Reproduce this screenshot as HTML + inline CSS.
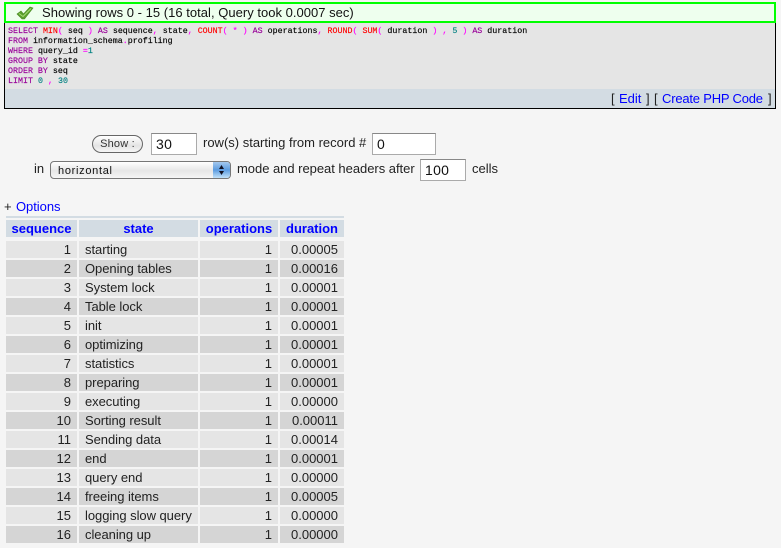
<!DOCTYPE html>
<html>
<head>
<meta charset="utf-8">
<style>
html,body{margin:0;padding:0}
body{width:781px;height:548px;background:#f5f5f5;position:relative;overflow:hidden;font-family:"Liberation Sans",sans-serif;font-size:13px;color:#222}
.a{position:absolute;white-space:nowrap}
a{color:#0000ff;text-decoration:none}
#ok{left:4px;top:2px;width:768px;height:17px;border:2px solid #00ff00;background:#eeffee}
#box{left:4px;top:23px;width:770px;height:85px;border:1px solid #000;border-top:0;background:#e5e5e5}
#foot{left:0;bottom:0;width:770px;height:19px;background:#d3dce3}
#sql{left:8px;top:27px;font:8.32px/10px "Liberation Mono",monospace;color:#000;white-space:pre;-webkit-text-stroke:.15px}
.k{color:#990099}.f{color:#ff0000}.p{color:#ff00ff}.n{color:#008080}
.in{background:#fff;border:1px solid #aaa;border-top-color:#888;height:22px;box-sizing:border-box;font-size:14px;line-height:21px;padding-left:4px;color:#111;letter-spacing:.3px}
#btn{left:92px;top:135px;width:51px;height:18px;box-sizing:border-box;border:1px solid #666;border-radius:9px;background:linear-gradient(#fff,#e4e4e4 60%,#f6f6f6);font-size:11px;line-height:17px;text-align:center;color:#333;letter-spacing:.2px}
#sel{left:50px;top:161px;width:181px;height:18px;box-sizing:border-box;border:1px solid #777;border-radius:4px;background:linear-gradient(#fff,#e6e6e6 55%,#f6f6f6);font-size:11px;line-height:18px;padding-left:7px;color:#111;letter-spacing:.7px;overflow:hidden}
#arr{position:absolute;right:0;top:0;width:17px;height:16px;background:linear-gradient(#a4c8ee,#5c9ce0 50%,#c2e2fa)}
.top{position:absolute;left:6px;top:216px;width:338px;height:2px;background:#d3dce3}
.c{position:absolute;height:17px;line-height:17px;box-sizing:border-box;padding:0 6px;color:#222;white-space:nowrap}
.h{font-weight:bold;text-align:center;background:#d3dce3;color:#0000ff;padding:0}
.o{background:#e5e5e5}.e{background:#d5d5d5}.c1{left:6px;width:71px;text-align:right}.c2{left:79px;width:119px;letter-spacing:-.05px}.c3{left:200px;width:78px;text-align:right}.c4{left:280px;width:64px;text-align:right}
</style>
</head>
<body>
<div class="a" id="ok"></div>
<svg class="a" style="left:16px;top:6px" width="18" height="14" viewBox="0 0 18 14"><path d="M1 8 L5 5 L7.5 8 L14 1 L17 2 L8.5 13 L6 13 Z" fill="#5aa02c" stroke="#4a8a24" stroke-width=".6"/><path d="M3 7.5 L7 10.5 L15 2.5" fill="none" stroke="#a8dc78" stroke-width="1"/></svg>
<div class="a" style="left:42px;top:5px;font-size:13px;line-height:16px;color:#111;letter-spacing:.02px">Showing rows 0 - 15 (16 total, Query took 0.0007 sec)</div>
<div class="a" id="box"><div class="a" id="foot"></div></div>
<div class="a" id="sql"><span class="k">SELECT</span> <span class="f">MIN</span><span class="p">(</span> seq <span class="p">)</span> <span class="k">AS</span> sequence<span class="p">,</span> state<span class="p">,</span> <span class="f">COUNT</span><span class="p">(</span> <span class="p">*</span> <span class="p">)</span> <span class="k">AS</span> operations<span class="p">,</span> <span class="f">ROUND</span><span class="p">(</span> <span class="f">SUM</span><span class="p">(</span> duration <span class="p">)</span> <span class="p">,</span> <span class="n">5</span> <span class="p">)</span> <span class="k">AS</span> duration
<span class="k">FROM</span> information_schema<span class="p">.</span>profiling
<span class="k">WHERE</span> query_id <span class="p">=</span><span class="n">1</span>
<span class="k">GROUP BY</span> state
<span class="k">ORDER BY</span> seq
<span class="k">LIMIT</span> <span class="n">0</span> <span class="p">,</span> <span class="n">30</span></div>
<div class="a" style="left:611px;top:91px;line-height:16px">[</div>
<div class="a" style="left:619px;top:91px;line-height:16px"><a>Edit</a></div>
<div class="a" style="left:646px;top:91px;line-height:16px">]</div>
<div class="a" style="left:654px;top:91px;line-height:16px">[</div>
<div class="a" style="left:662px;top:91px;line-height:16px;letter-spacing:-.2px"><a>Create PHP Code</a></div>
<div class="a" style="left:768px;top:91px;line-height:16px">]</div>

<div class="a" id="btn">Show :</div>
<div class="a in" style="left:151px;top:133px;width:46px">30</div>
<div class="a" style="left:203px;top:135px;line-height:16px">row(s) starting from record #</div>
<div class="a in" style="left:372px;top:133px;width:64px">0</div>
<div class="a" style="left:34px;top:161px;line-height:16px">in</div>
<div class="a" id="sel">horizontal<div id="arr"><svg width="17" height="16" style="display:block"><path d="M8.5 3 L11 7 H6 Z M8.5 13 L11 9 H6 Z" fill="#112"/></svg></div></div>
<div class="a" style="left:237px;top:161px;line-height:16px;letter-spacing:-.03px">mode and repeat headers after</div>
<div class="a in" style="left:420px;top:159px;width:46px">100</div>
<div class="a" style="left:472px;top:161px;line-height:16px">cells</div>
<div class="a" style="left:4px;top:199px;line-height:16px">+</div>
<div class="a" style="left:16px;top:199px;line-height:16px;letter-spacing:-.05px"><a>Options</a></div>

<div class="top"></div>
<div class="c h" style="left:6px;top:220px;width:71px">sequence</div>
<div class="c h" style="left:79px;top:220px;width:119px">state</div>
<div class="c h" style="left:200px;top:220px;width:78px">operations</div>
<div class="c h" style="left:280px;top:220px;width:64px">duration</div>
<div class="c o c1" style="top:241px">1</div><div class="c o c2" style="top:241px">starting</div><div class="c o c3" style="top:241px">1</div><div class="c o c4" style="top:241px">0.00005</div>
<div class="c e c1" style="top:260px">2</div><div class="c e c2" style="top:260px">Opening tables</div><div class="c e c3" style="top:260px">1</div><div class="c e c4" style="top:260px">0.00016</div>
<div class="c o c1" style="top:279px">3</div><div class="c o c2" style="top:279px">System lock</div><div class="c o c3" style="top:279px">1</div><div class="c o c4" style="top:279px">0.00001</div>
<div class="c e c1" style="top:298px">4</div><div class="c e c2" style="top:298px">Table lock</div><div class="c e c3" style="top:298px">1</div><div class="c e c4" style="top:298px">0.00001</div>
<div class="c o c1" style="top:317px">5</div><div class="c o c2" style="top:317px">init</div><div class="c o c3" style="top:317px">1</div><div class="c o c4" style="top:317px">0.00001</div>
<div class="c e c1" style="top:336px">6</div><div class="c e c2" style="top:336px">optimizing</div><div class="c e c3" style="top:336px">1</div><div class="c e c4" style="top:336px">0.00001</div>
<div class="c o c1" style="top:355px">7</div><div class="c o c2" style="top:355px">statistics</div><div class="c o c3" style="top:355px">1</div><div class="c o c4" style="top:355px">0.00001</div>
<div class="c e c1" style="top:374px">8</div><div class="c e c2" style="top:374px">preparing</div><div class="c e c3" style="top:374px">1</div><div class="c e c4" style="top:374px">0.00001</div>
<div class="c o c1" style="top:393px">9</div><div class="c o c2" style="top:393px">executing</div><div class="c o c3" style="top:393px">1</div><div class="c o c4" style="top:393px">0.00000</div>
<div class="c e c1" style="top:412px">10</div><div class="c e c2" style="top:412px">Sorting result</div><div class="c e c3" style="top:412px">1</div><div class="c e c4" style="top:412px">0.00011</div>
<div class="c o c1" style="top:431px">11</div><div class="c o c2" style="top:431px">Sending data</div><div class="c o c3" style="top:431px">1</div><div class="c o c4" style="top:431px">0.00014</div>
<div class="c e c1" style="top:450px">12</div><div class="c e c2" style="top:450px">end</div><div class="c e c3" style="top:450px">1</div><div class="c e c4" style="top:450px">0.00001</div>
<div class="c o c1" style="top:469px">13</div><div class="c o c2" style="top:469px">query end</div><div class="c o c3" style="top:469px">1</div><div class="c o c4" style="top:469px">0.00000</div>
<div class="c e c1" style="top:488px">14</div><div class="c e c2" style="top:488px">freeing items</div><div class="c e c3" style="top:488px">1</div><div class="c e c4" style="top:488px">0.00005</div>
<div class="c o c1" style="top:507px">15</div><div class="c o c2" style="top:507px">logging slow query</div><div class="c o c3" style="top:507px">1</div><div class="c o c4" style="top:507px">0.00000</div>
<div class="c e c1" style="top:526px">16</div><div class="c e c2" style="top:526px">cleaning up</div><div class="c e c3" style="top:526px">1</div><div class="c e c4" style="top:526px">0.00000</div>
</body>
</html>
